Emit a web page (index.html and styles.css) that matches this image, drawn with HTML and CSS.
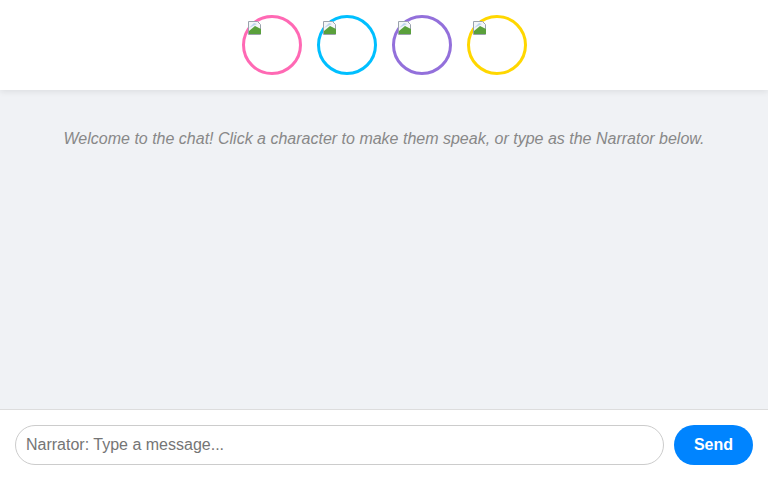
FILE: index.html
```html
<!DOCTYPE html>
<html>
<head>
<meta charset="utf-8">
<link rel="stylesheet" href="styles.css">
</head>
<body>
<div class="app">
  <header class="header">
    <div class="avatar pink"><svg class="broken" width="16" height="16" viewBox="0 0 16 16"><path d="M1.5 1.5h9l3 3v10h-12z" fill="#f4f6f8" stroke="#9aa3ad"/><path d="M2 11l6-5 6 3v5H2z" fill="#5aa03c"/><path d="M2 8l5-5 3 1" fill="#bcd4ee"/></svg></div>
    <div class="avatar cyan"><svg class="broken" width="16" height="16" viewBox="0 0 16 16"><path d="M1.5 1.5h9l3 3v10h-12z" fill="#f4f6f8" stroke="#9aa3ad"/><path d="M2 11l6-5 6 3v5H2z" fill="#5aa03c"/><path d="M2 8l5-5 3 1" fill="#bcd4ee"/></svg></div>
    <div class="avatar purple"><svg class="broken" width="16" height="16" viewBox="0 0 16 16"><path d="M1.5 1.5h9l3 3v10h-12z" fill="#f4f6f8" stroke="#9aa3ad"/><path d="M2 11l6-5 6 3v5H2z" fill="#5aa03c"/><path d="M2 8l5-5 3 1" fill="#bcd4ee"/></svg></div>
    <div class="avatar gold"><svg class="broken" width="16" height="16" viewBox="0 0 16 16"><path d="M1.5 1.5h9l3 3v10h-12z" fill="#f4f6f8" stroke="#9aa3ad"/><path d="M2 11l6-5 6 3v5H2z" fill="#5aa03c"/><path d="M2 8l5-5 3 1" fill="#bcd4ee"/></svg></div>
  </header>
  <main class="chat">
    <p class="welcome">Welcome to the chat! Click a character to make them speak, or type as the Narrator below.</p>
  </main>
  <footer class="footer">
    <input class="msg" type="text" placeholder="Narrator: Type a message...">
    <button class="send">Send</button>
  </footer>
</div>
</body>
</html>
```
FILE: styles.css
```css
* { box-sizing: border-box; }
html, body { margin: 0; height: 100%; }
body {
  font-family: "Liberation Sans", Arial, sans-serif;
  background: #f0f2f5;
}
.app {
  display: flex;
  flex-direction: column;
  height: 480px;
}
.header {
  height: 90px;
  background: #fff;
  display: flex;
  justify-content: center;
  align-items: center;
  gap: 15px;
  box-shadow: 0 2px 6px rgba(0,0,0,0.08);
  position: relative;
  z-index: 1;
  flex-shrink: 0;
}
.avatar {
  width: 60px;
  height: 60px;
  border-radius: 50%;
  border: 3px solid;
  background: #fff;
  padding: 2px 0 0 2px;
}
.broken { display: block; }
.pink { border-color: #ff69b4; }
.cyan { border-color: #00bfff; }
.purple { border-color: #9370db; }
.gold { border-color: #ffd700; }
.chat {
  flex: 1;
  padding: 39px 15px 0;
}
.welcome {
  margin: 0;
  text-align: center;
  font-style: italic;
  color: #888;
  font-size: 16px;
  line-height: 20px;
}
.footer {
  flex-shrink: 0;
  height: 71px;
  background: #fff;
  border-top: 1px solid #ddd;
  display: flex;
  align-items: center;
  gap: 10px;
  padding: 0 15px;
}
.msg {
  flex: 1;
  height: 40px;
  border: 1px solid #ccc;
  border-radius: 20px;
  padding: 0 10px;
  font-family: "Liberation Sans", Arial, sans-serif;
  font-size: 16px;
  color: #333;
  outline: none;
}
.msg::placeholder { color: #757575; }
.send {
  width: 79px;
  height: 40px;
  border: none;
  border-radius: 20px;
  background: #0084ff;
  color: #fff;
  font-family: "Liberation Sans", Arial, sans-serif;
  font-weight: bold;
  font-size: 16px;
}
```
